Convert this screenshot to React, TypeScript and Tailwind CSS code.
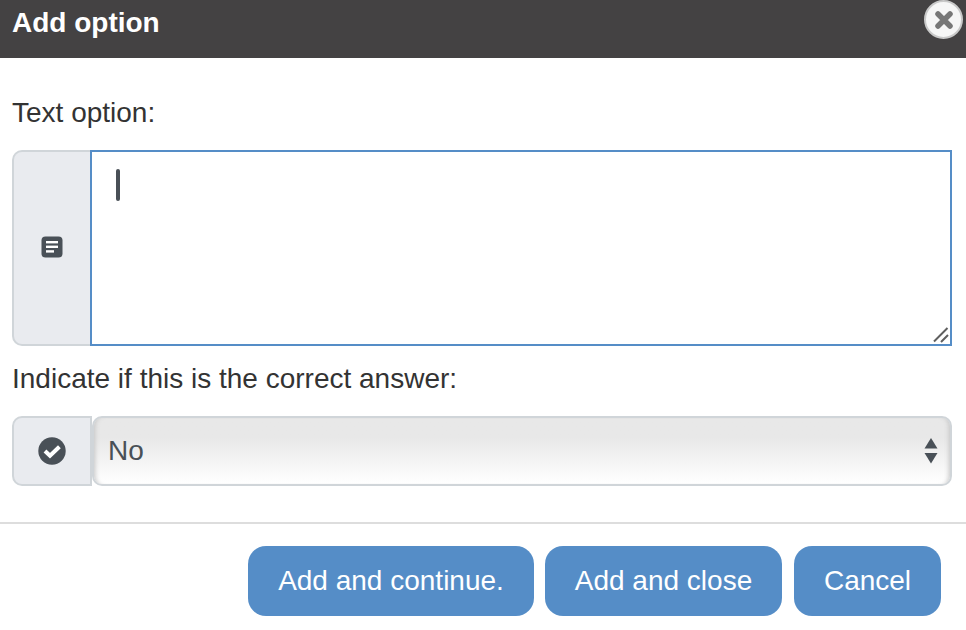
const font = "font-['Liberation_Sans',Arial,sans-serif]";

function NoteIcon() {
  return (
    <svg width="22" height="22" viewBox="0 0 22 22" aria-hidden="true">
      <rect x="0.5" y="0.5" width="21" height="21" rx="4" fill="#495057" />
      <rect x="5" y="5" width="12" height="2.4" fill="#fff" />
      <rect x="5" y="9.6" width="12" height="2.4" fill="#fff" />
      <rect x="5" y="14.2" width="8" height="2.4" fill="#fff" />
    </svg>
  );
}

function CheckIcon() {
  return (
    <svg width="28" height="28" viewBox="0 0 28 28" aria-hidden="true">
      <circle cx="14" cy="14" r="13.7" fill="#495057" />
      <path d="M7 14 L12 18.8 L21.4 9.8" fill="none" stroke="#fff" strokeWidth="4" />
    </svg>
  );
}

function SortArrows() {
  return (
    <svg width="14" height="28" viewBox="0 0 14 28" aria-hidden="true">
      <path d="M7 1 L13.5 11.5 H0.5 Z" fill="#495057" />
      <path d="M0.5 16 H13.5 L7 26.5 Z" fill="#495057" />
    </svg>
  );
}

function ResizeGrip() {
  return (
    <svg width="16" height="16" viewBox="0 0 16 16" aria-hidden="true">
      <path d="M1 14.5 L14.5 1 M8 15 L15 8" stroke="#5f5f5f" strokeWidth="2" fill="none" />
    </svg>
  );
}

function FooterButton({ label, className }: { label: string; className: string }) {
  return (
    <button className={`h-[70px] rounded-[18px] bg-[#558dc7] text-[28px] text-white ${className}`}>
      {label}
    </button>
  );
}

export default function App() {
  return (
    <div className={`h-[630px] w-[966px] overflow-hidden bg-white ${font} text-[#333333]`}>
      <header className="relative flex h-[58px] items-start bg-[#444243] pl-3 pt-[5px]">
        <h1 className="text-[28px] leading-[36px] font-bold text-white">Add option</h1>
        <button className="absolute right-[3px] top-0 flex h-[39px] w-[39px] items-center justify-center rounded-full border-2 border-[#c9c9c9] bg-[#f6f6f6]">
          <svg width="20" height="20" viewBox="0 0 20 20" aria-hidden="true">
            <path d="M4 4 L16 16 M16 4 L4 16" stroke="#777" strokeWidth="5.5" strokeLinecap="round" />
          </svg>
        </button>
      </header>

      <main className="px-3">
        <p className="mt-[39px] text-[28px] leading-[32px]">Text option:</p>

        <div className="mt-[21px] mr-[2px] flex h-[196px]">
          <div className="flex w-[78px] items-center justify-center rounded-l-[10px] border-2 border-r-0 border-[#d0d5d9] bg-[#e9ebef] pb-[3px]">
            <NoteIcon />
          </div>
          <div className="relative flex-1 border-2 border-[#558dc7] bg-white">
            <div className="absolute left-[24px] top-[17px] h-[32px] w-[4px] rounded-sm bg-[#495057]" />
            <div className="absolute bottom-px right-px">
              <ResizeGrip />
            </div>
          </div>
        </div>

        <p className="mt-[17px] text-[28px] leading-[32px]">Indicate if this is the correct answer:</p>

        <div className="mt-[21px] mr-[2px] flex h-[70px]">
          <div className="flex w-[80px] items-center justify-center rounded-l-[10px] border-2 border-[#d0d5d9] bg-[#e9ebef]">
            <CheckIcon />
          </div>
          <div className="flex flex-1 items-center justify-between rounded-[10px] border-2 border-[#d0d5d9] bg-gradient-to-b from-[#e8e8e8] from-30% to-white pl-[14px] pr-[12px] text-[28px] text-[#495057] shadow-[inset_5px_0_5px_-4px_#c4c4c4,inset_-5px_0_5px_-4px_#c4c4c4]">
            <span>No</span>
            <SortArrows />
          </div>
        </div>
      </main>

      <footer className="mt-[36px] flex justify-end gap-3 border-t-2 border-[#dddddd] pt-[22px] pr-[25px]">
        <FooterButton label="Add and continue." className="-mr-px w-[286px]" />
        <FooterButton label="Add and close" className="w-[237px]" />
        <FooterButton label="Cancel" className="w-[147px]" />
      </footer>
    </div>
  );
}
